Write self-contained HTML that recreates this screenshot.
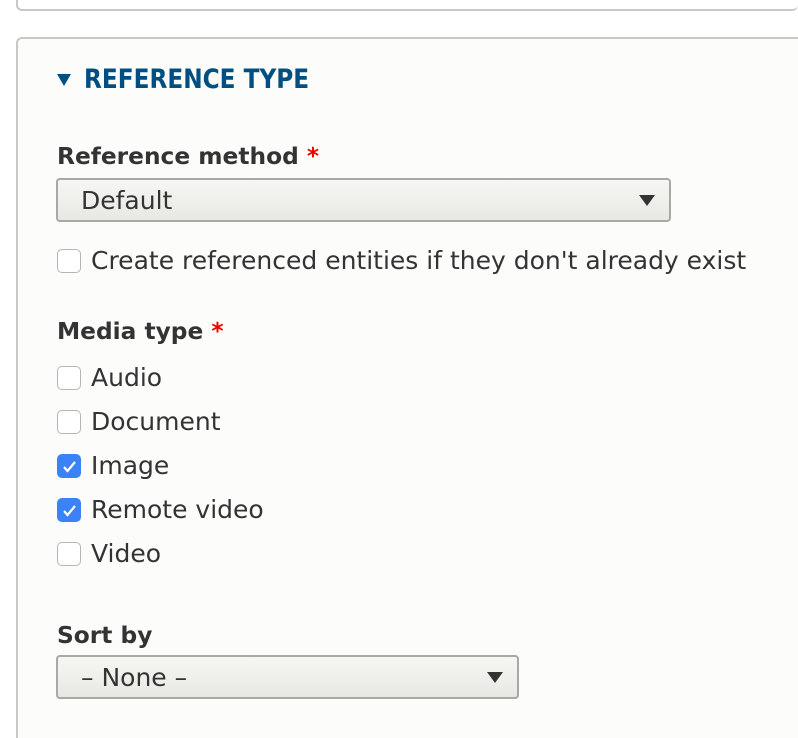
<!DOCTYPE html>
<html><head><meta charset="utf-8"><style>
*{margin:0;padding:0;box-sizing:border-box}
html,body{width:798px;height:738px;overflow:hidden}
body{background:#fff;position:relative;font-family:"DejaVu Sans","Liberation Sans",sans-serif;color:#333}
.a{position:absolute;white-space:nowrap}
.box{position:absolute;border:2px solid #c8c8c4;border-radius:6px;background:#fcfcfa}
.lbl{font-weight:bold;font-size:23.3px;color:#333}
.req{color:#e00;font-weight:bold}
.sel{position:absolute;height:44px;border:2px solid #a8a8a4;border-radius:4px;background:linear-gradient(#f6f6f3,#e8e8e3);font-size:25px;line-height:42px;padding-left:23px;color:#333}
.sel:after{content:"";position:absolute;right:14px;top:15px;border-left:8px solid transparent;border-right:8px solid transparent;border-top:11px solid #333}
.cb{position:absolute;width:24px;height:24px;border:1px solid #b5b5b5;border-radius:5px;background:#fff}
.cb.on{background:#3b82f6;border-color:#3b82f6}
.cb.on svg{position:absolute;left:4px;top:5px}
.t{font-size:25px;color:#333}
</style></head><body>
<div class="box" style="left:16px;top:-20px;width:782px;height:31px;background:#fff;border-right:none"></div>
<div class="box" style="left:16px;top:37px;width:782px;height:701px;border-right:none;border-bottom:none;border-radius:6px 0 0 0"></div>
<div class="a" style="left:57px;top:74px;width:0;height:0;border-left:7px solid transparent;border-right:7px solid transparent;border-top:12px solid #004f80"></div>
<div class="a" style="left:84px;top:64px;font-size:27px;font-weight:bold;color:#004f80;transform:scaleX(0.86);transform-origin:0 0">REFERENCE TYPE</div>
<div class="a lbl" style="left:57px;top:143px">Reference method <span class="req">*</span></div>
<div class="sel" style="left:56px;top:178px;width:615px">Default</div>
<div class="cb" style="left:57px;top:249px"></div>
<div class="a t" style="left:91px;top:246px">Create referenced entities if they don't already exist</div>
<div class="a lbl" style="left:57px;top:318px">Media type <span class="req">*</span></div>
<div class="cb" style="left:57px;top:366px"></div><div class="a t" style="left:91px;top:363px">Audio</div>
<div class="cb" style="left:57px;top:410px"></div><div class="a t" style="left:91px;top:407px">Document</div>
<div class="cb on" style="left:57px;top:454px"><svg width="15" height="13" viewBox="0 0 15 13"><path d="M2 7l3.5 4L13 2" fill="none" stroke="#fff" stroke-width="2.2"/></svg></div><div class="a t" style="left:91px;top:451px">Image</div>
<div class="cb on" style="left:57px;top:498px"><svg width="15" height="13" viewBox="0 0 15 13"><path d="M2 7l3.5 4L13 2" fill="none" stroke="#fff" stroke-width="2.2"/></svg></div><div class="a t" style="left:91px;top:495px">Remote video</div>
<div class="cb" style="left:57px;top:542px"></div><div class="a t" style="left:91px;top:539px">Video</div>
<div class="a lbl" style="left:57px;top:622px">Sort by</div>
<div class="sel" style="left:56px;top:655px;width:463px">– None –</div>
</body></html>
